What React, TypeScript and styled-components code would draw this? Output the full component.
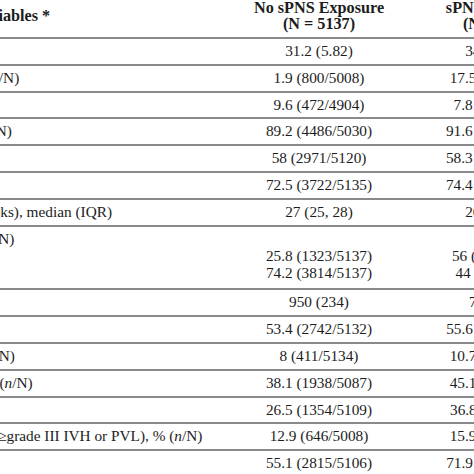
import React from 'react';
import styled, { createGlobalStyle } from 'styled-components';

const GlobalStyle = createGlobalStyle`
  html, body {
    margin: 0;
    padding: 0;
    background: #ffffff;
  }
`;

// visible window onto the (wider) table
const Sheet = styled.div`
  width: 474px;
  height: 474px;
  overflow: hidden;
  background: #fff;
`;

const Table = styled.table`
  margin-left: -136px;
  width: 736px;
  border-collapse: collapse;
  table-layout: fixed;
  font-family: "Liberation Serif", "Times New Roman", serif;
  font-size: 15.3px;
  color: #1c1c1c;
`;

const Col = styled.col<{ $w: number }>`
  width: ${p => p.$w}px;
`;

const HeadCell = styled.th<{ $first?: boolean }>`
  font-weight: bold;
  font-size: 16.2px;
  line-height: 16px;
  padding: 0 0 5px ${p => (p.$first ? '109px' : '0')};
  text-align: ${p => (p.$first ? 'left' : 'center')};
  vertical-align: middle;
  white-space: nowrap;
  border-bottom: 2px solid #8a8a8a;
`;

type Part = 'single' | 'top' | 'mid' | 'end';

// one table cell; $part says where it sits in a grouped (sub-row) block
const Cell = styled.td<{ $label?: boolean; $part: Part; $indent?: boolean }>`
  text-align: ${p => (p.$label ? 'left' : 'center')};
  white-space: nowrap;
  vertical-align: middle;
  padding-left: ${p => (p.$label ? (p.$indent ? '22px' : '8px') : '0')};
  padding-right: 0;
  line-height: ${p => (p.$part === 'single' || p.$part === 'top' ? '16.8px' : '17px')};
  padding-top: ${p => (p.$part === 'single' || p.$part === 'top' ? '4px' : '0')};
  padding-bottom: ${p => (p.$part === 'single' ? '4px' : p.$part === 'end' ? '7px' : '0')};
  border-bottom: ${p => (p.$part === 'single' || p.$part === 'end' ? '2px solid #8a8a8a' : 'none')};
`;

const N = () => (
  <>
    (<i>n</i>/N)
  </>
);

type Row = {
  label: React.ReactNode;
  a: string;
  b: string;
  subs?: { label: string; a: string; b: string }[];
};

const rows: Row[] = [
  { label: 'Maternal age', a: '31.2 (5.82)', b: '34.1 (5.91)' },
  { label: <>Maternal fever, % <N /></>, a: '1.9 (800/5008)', b: '17.5 (365/2085)' },
  { label: <>Diabetes, % <N /></>, a: '9.6 (472/4904)', b: '7.8 (162/2077)' },
  { label: <>Hypertension, % <N /></>, a: '89.2 (4486/5030)', b: '91.6 (1905/2080)' },
  { label: <>Inborn, % <N /></>, a: '58 (2971/5120)', b: '58.3 (1237/2122)' },
  { label: <>Singleton, % <N /></>, a: '72.5 (3722/5135)', b: '74.4 (1580/2124)' },
  { label: 'Gestational age (weeks), median (IQR)', a: '27 (25, 28)', b: '26 (24, 27)' },
  {
    label: <>Mode of birth, % <N /></>,
    a: '',
    b: '',
    subs: [
      { label: 'Vaginal', a: '25.8 (1323/5137)', b: '56 (1190/2125)' },
      { label: 'Cesarean', a: '74.2 (3814/5137)', b: '44 (935/2125)' },
    ],
  },
  { label: 'Birth weight (g)', a: '950 (234)', b: '768 (241)' },
  { label: <>Male sex, % <N /></>, a: '53.4 (2742/5132)', b: '55.6 (1181/2124)' },
  { label: <>Multiple birth, % <N /></>, a: '8 (411/5134)', b: '10.7 (227/2122)' },
  { label: <>Maternal anemia, % <N /></>, a: '38.1 (1938/5087)', b: '45.1 (947/2100)' },
  { label: <>Sepsis, % <N /></>, a: '26.5 (1354/5109)', b: '36.8 (780/2119)' },
  {
    label: <>Severe brain injury (≥grade III IVH or PVL), % <N /></>,
    a: '12.9 (646/5008)',
    b: '15.9 (324/2038)',
  },
  { label: <>BPD, % <N /></>, a: '55.1 (2815/5106)', b: '71.9 (1522/2117)' },
];

export default function App() {
  return (
    <>
      <GlobalStyle />
      <Sheet>
        <Table>
          <colgroup>
            <Col $w={376} />
            <Col $w={158} />
            <Col $w={202} />
          </colgroup>
          <thead>
            <tr>
              <HeadCell $first>Variables *</HeadCell>
              <HeadCell>
                No sPNS Exposure
                <br />
                (N = 5137)
              </HeadCell>
              <HeadCell>
                sPNS Exposure
                <br />
                (N = 2125)
              </HeadCell>
            </tr>
          </thead>
          <tbody>
            {rows.map((r, i) =>
              r.subs ? (
                <React.Fragment key={i}>
                  <tr>
                    <Cell $label $part="top">{r.label}</Cell>
                    <Cell $part="top">{r.a}</Cell>
                    <Cell $part="top">{r.b}</Cell>
                  </tr>
                  {r.subs.map((s, j) => {
                    const part: Part = j === r.subs!.length - 1 ? 'end' : 'mid';
                    return (
                      <tr key={j}>
                        <Cell $label $indent $part={part}>{s.label}</Cell>
                        <Cell $part={part}>{s.a}</Cell>
                        <Cell $part={part}>{s.b}</Cell>
                      </tr>
                    );
                  })}
                </React.Fragment>
              ) : (
                <tr key={i}>
                  <Cell $label $part="single">{r.label}</Cell>
                  <Cell $part="single">{r.a}</Cell>
                  <Cell $part="single">{r.b}</Cell>
                </tr>
              )
            )}
          </tbody>
        </Table>
      </Sheet>
    </>
  );
}
